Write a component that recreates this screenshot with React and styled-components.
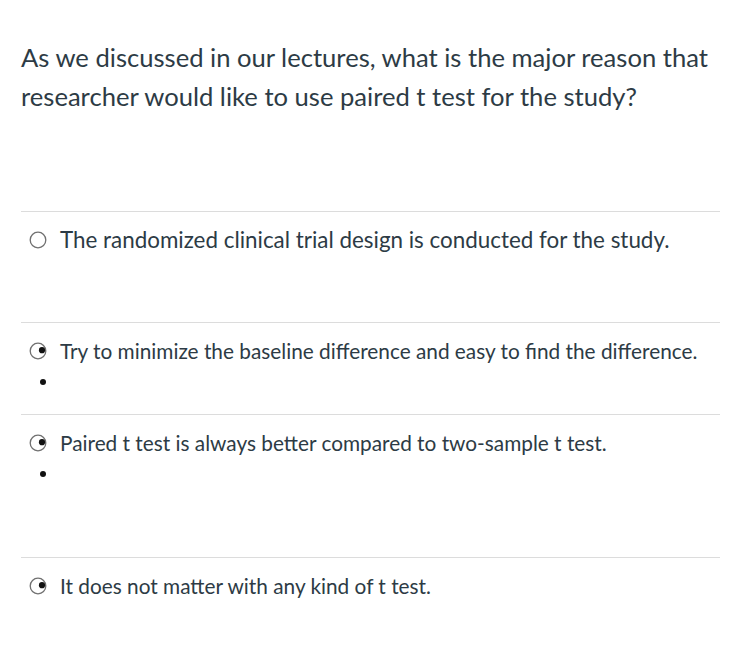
import React from "react";
import styled, { createGlobalStyle } from "styled-components";

const GlobalStyle = createGlobalStyle`
  body {
    margin: 0;
    background: #ffffff;
    font-family: Lato, "Open Sans", sans-serif;
    color: #2d3b45;
  }
`;

const Page = styled.div`
  padding: 38px 16px 0 21px;
  width: 736px;
  box-sizing: border-box;
`;

const Question = styled.p`
  margin: 0 0 95px 0;
  font-size: 25.6px;
  line-height: 39px;
  color: #2d3b45;
`;

const Answer = styled.div`
  border-top: 1px solid #dcdcdc;
  height: ${(p) => p.height}px;
  box-sizing: border-box;
  padding-top: 13px;
`;

const Row = styled.label`
  display: flex;
  align-items: center;
  gap: 13px;
  padding-left: 8px;
  font-size: ${(p) => p.size}px;
  line-height: 30px;
  color: #2d3b45;
`;

const Bullet = styled.span`
  display: block;
  width: 6px;
  height: 6px;
  border-radius: 50%;
  background: #111;
  margin: 13px 0 0 19px;
`;

function Radio({ dotted }) {
  return (
    <svg width="18" height="18" viewBox="0 0 18 18">
      <circle cx="9" cy="9" r="7.8" fill="#fff" stroke="#707070" strokeWidth="1.3" />
      {dotted && <circle cx="13" cy="8.2" r="3.1" fill="#111" />}
    </svg>
  );
}

const answers = [
  { text: "The randomized clinical trial design is conducted for the study.", height: 111, size: 22.4 },
  { text: "Try to minimize the baseline difference and easy to find the difference.", height: 92, size: 20.8, dotted: true, bullet: true },
  { text: "Paired t test is always better compared to two-sample t test.", height: 143, size: 20.8, dotted: true, bullet: true },
  { text: "It does not matter with any kind of t test.", height: 80, size: 20.8, dotted: true },
];

export default function App() {
  return (
    <>
      <GlobalStyle />
      <Page>
        <Question>
          As we discussed in our lectures, what is the major reason that researcher would like to use paired t test for the study?
        </Question>
        {answers.map((a, i) => (
          <Answer key={i} height={a.height}>
            <Row size={a.size}>
              <Radio dotted={a.dotted} />
              {a.text}
            </Row>
            {a.bullet && <Bullet />}
          </Answer>
        ))}
      </Page>
    </>
  );
}
